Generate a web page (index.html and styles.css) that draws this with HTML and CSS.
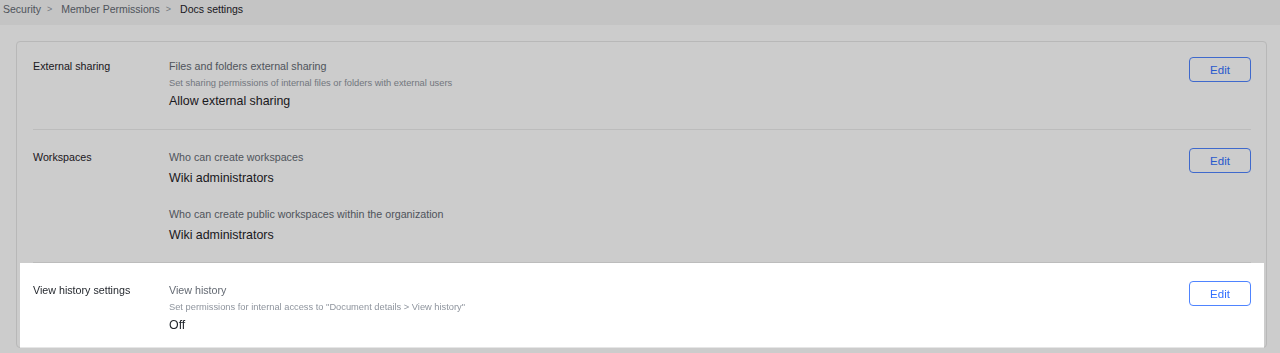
FILE: index.html
```html
<!DOCTYPE html>
<html lang="en">
<head>
    <meta charset="UTF-8">
    <meta name="viewport" content="width=device-width, initial-scale=1.0">
    <title>Docs settings</title>
    <link rel="stylesheet" href="styles.css">
</head>
<body>
    <div class="topbar">
        <span class="crumb">Security</span>
        <span class="sep">&gt;</span>
        <span class="crumb">Member Permissions</span>
        <span class="sep">&gt;</span>
        <span class="crumb current">Docs settings</span>
    </div>

    <div class="page">
        <div class="card">
            <div class="row first">
                <div class="label">External sharing</div>
                <div class="content">
                    <div class="group">
                        <div class="title">Files and folders external sharing</div>
                        <div class="desc">Set sharing permissions of internal files or folders with external users</div>
                        <div class="value">Allow external sharing</div>
                    </div>
                </div>
                <button class="edit">Edit</button>
            </div>
            <div class="divider"></div>

            <div class="row">
                <div class="label">Workspaces</div>
                <div class="content">
                    <div class="group">
                        <div class="title">Who can create workspaces</div>
                        <div class="value">Wiki administrators</div>
                    </div>
                    <div class="group">
                        <div class="title">Who can create public workspaces within the organization</div>
                        <div class="value">Wiki administrators</div>
                    </div>
                </div>
                <button class="edit">Edit</button>
            </div>
            <div class="divider"></div>

            <div class="row last spotlight">
                <div class="label">View history settings</div>
                <div class="content">
                    <div class="group">
                        <div class="title">View history</div>
                        <div class="desc">Set permissions for internal access to "Document details &gt; View history"</div>
                        <div class="value">Off</div>
                    </div>
                </div>
                <button class="edit">Edit</button>
            </div>
        </div>
    </div>

    <div class="mask"></div>
</body>
</html>
```

FILE: styles.css
```css
body {
    margin: 0;
    font-family: "Liberation Sans", Arial, sans-serif;
    background-color: #ffffff;
    color: #1f2329;
}

.topbar {
    height: 25px;
    background-color: #f5f5f5;
    display: flex;
    align-items: center;
    padding: 0 3px 8px;
    box-sizing: border-box;
    font-size: 10.5px;
}

.crumb {
    color: #646a73;
}

.crumb.current {
    color: #1f2329;
}

.sep {
    color: #8f959e;
    font-size: 9px;
    margin: 0 9px 0 6px;
}

.page {
    padding: 16px 13px 0 16px;
}

.card {
    border: 1px solid #e6e6e6;
    border-radius: 4px;
    padding: 0 2px 0 3px;
}

.row {
    display: grid;
    grid-template-columns: 136px 1fr auto;
    padding: 17px 13px 16px;
}

.row.first {
    padding-top: 14px;
    padding-bottom: 17px;
}

.row.last {
    padding-bottom: 11px;
}

.divider {
    height: 1px;
    background-color: #ebebeb;
    margin: 0 13px;
}

.label {
    font-size: 10.7px;
    line-height: 20px;
}

.group + .group {
    margin-top: 15px;
}

.title {
    font-size: 10.7px;
    line-height: 20px;
    color: #646a73;
}

.desc {
    font-size: 9.3px;
    line-height: 14px;
    color: #8f959e;
}

.value {
    font-size: 12.4px;
    line-height: 22px;
    color: #1f2329;
}

.edit {
    width: 62px;
    height: 25px;
    margin-top: 1px;
    border: 1px solid #4f84ff;
    border-radius: 4px;
    background-color: transparent;
    color: #3370ff;
    font-family: inherit;
    font-size: 11.5px;
    padding: 0;
    cursor: pointer;
}

.mask {
    position: fixed;
    inset: 0;
    background-color: rgba(0, 0, 0, 0.2);
    z-index: 1;
}

.spotlight {
    position: relative;
    z-index: 2;
    background-color: #ffffff;
    box-shadow: 0 1px 0 #e6e6e6;
}
```
